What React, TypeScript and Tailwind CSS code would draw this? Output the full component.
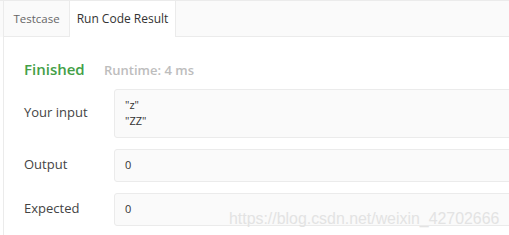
export default function App() {
  const rows = [
    { label: "Your input", lines: ['"z"', '"ZZ"'], h: "h-[49px]" },
    { label: "Output", lines: ["0"], h: "h-[33px]" },
    { label: "Expected", lines: ["0"], h: "h-[33px]" },
  ]

  return (
    <div className="relative h-[235px] w-[509px] overflow-hidden bg-white font-['Open_Sans',sans-serif] text-[#333]">
      {/* tabs */}
      <div className="flex h-[37px] border-t border-[#ebebeb] bg-[#fafafa]">
        <div className="ml-[3px] flex w-[66px] items-center justify-center border-b border-l border-[#ebebeb] text-[11.5px] text-[#666]">
          Testcase
        </div>
        <div className="flex w-[107px] items-center justify-center border-x border-[#ebebeb] bg-white text-[12px] text-[#333]">
          Run Code Result
        </div>
        <div className="flex-1 border-b border-[#ebebeb]" />
      </div>

      {/* result */}
      <div className="ml-[3px] h-full border-l border-[#ebebeb] pl-[20px] pt-[21px]">
        <div className="flex items-baseline">
          <span className="w-[80px] text-[15px] font-semibold text-[#43a047]">Finished</span>
          <span className="text-[13px] font-semibold text-[#bdbdbd]">Runtime: 4 ms</span>
        </div>

        <div className="mt-[8px] flex flex-col gap-[11px]">
          {rows.map((r) => (
            <div key={r.label} className="flex items-center">
              <div className="w-[90px] text-[13px] text-[#444]">{r.label}</div>
              <div
                className={`-mr-[8px] flex flex-1 flex-col justify-center rounded-[3px] border border-[#ebebeb] bg-[#fafafa] pl-[10px] text-[11px] leading-[16px] text-[#333] ${r.h}`}
              >
                {r.lines.map((l) => (
                  <div key={l}>{l}</div>
                ))}
              </div>
            </div>
          ))}
        </div>
      </div>

      {/* watermark */}
      <div className="pointer-events-none absolute left-[229px] top-[207px] font-['Liberation_Sans',sans-serif] text-[15.9px] text-[#e3e3e3]">
        https://blog.csdn.net/weixin_42702666
      </div>
    </div>
  )
}
